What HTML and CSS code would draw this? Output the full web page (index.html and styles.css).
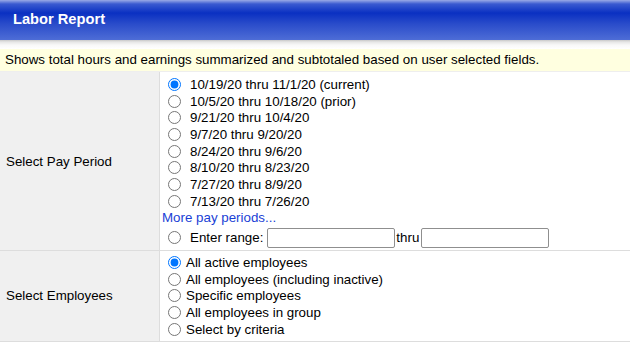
FILE: index.html
```html
<!DOCTYPE html>
<html>
<head>
<meta charset="utf-8">
<link rel="stylesheet" href="styles.css">
</head>
<body>
<div class="header"><span class="title">Labor Report</span></div>
<div class="shadow"></div>
<div class="desc">Shows total hours and earnings summarized and subtotaled based on user selected fields.</div>
<table class="form">
  <tr>
    <td class="label">Select Pay Period</td>
    <td class="field pay">
      <div class="opt wide"><input type="radio" name="pp" checked><span>10/19/20 thru 11/1/20 (current)</span></div>
      <div class="opt wide"><input type="radio" name="pp"><span>10/5/20 thru 10/18/20 (prior)</span></div>
      <div class="opt wide"><input type="radio" name="pp"><span>9/21/20 thru 10/4/20</span></div>
      <div class="opt wide"><input type="radio" name="pp"><span>9/7/20 thru 9/20/20</span></div>
      <div class="opt wide"><input type="radio" name="pp"><span>8/24/20 thru 9/6/20</span></div>
      <div class="opt wide"><input type="radio" name="pp"><span>8/10/20 thru 8/23/20</span></div>
      <div class="opt wide"><input type="radio" name="pp"><span>7/27/20 thru 8/9/20</span></div>
      <div class="opt wide"><input type="radio" name="pp"><span>7/13/20 thru 7/26/20</span></div>
      <div class="more"><a href="#">More pay periods...</a></div>
      <div class="opt wide range"><input type="radio" name="pp"><span>Enter range:</span><input type="text" class="date first"><span class="thru">thru</span><input type="text" class="date"></div>
    </td>
  </tr>
  <tr>
    <td class="label">Select Employees</td>
    <td class="field emp">
      <div class="opt"><input type="radio" name="emp" checked><span>All active employees</span></div>
      <div class="opt"><input type="radio" name="emp"><span>All employees (including inactive)</span></div>
      <div class="opt"><input type="radio" name="emp"><span>Specific employees</span></div>
      <div class="opt"><input type="radio" name="emp"><span>All employees in group</span></div>
      <div class="opt"><input type="radio" name="emp"><span>Select by criteria</span></div>
    </td>
  </tr>
</table>
</body>
</html>
```
FILE: styles.css
```css
html, body {
  margin: 0;
  padding: 0;
  background: #ffffff;
  font-family: "Liberation Sans", Arial, sans-serif;
  font-size: 13.33px;
  color: #000;
}
.header {
  height: 40px;
  background: linear-gradient(to bottom, #9aaae6 0px, #3a5ad0 4px, #0a30c2 13px, #2a4cca 24px, #4e6dd6 40px);
  display: flex;
  align-items: center;
  padding-left: 13px;
}
.title {
  color: #ffffff;
  font-weight: bold;
  font-size: 14.67px;
  margin-top: -2px;
}
.shadow {
  height: 9px;
  background: linear-gradient(to bottom, #c8c8c8 0px, #e6e6e6 2px, #f8f8f8 5px, #ffffff 9px);
}
.desc {
  background: #ffffe0;
  height: 22px;
  line-height: 22px;
  padding-left: 5px;
  border-bottom: 1px solid #eeeeee;
}
.form {
  border-collapse: collapse;
  width: 100%;
}
.form td {
  padding: 0;
  border-bottom: 1px solid #dddddd;
}
.label {
  width: 153px;
  background: #f0f0f0;
  padding-left: 6px !important;
  vertical-align: middle;
  border-right: 1px solid #dddddd;
}
.field {
  vertical-align: top;
  padding: 3px 0 3px 2px !important;
}
.field.pay {
  padding-top: 4px !important;
  padding-bottom: 1px !important;
}
.opt {
  display: flex;
  align-items: center;
  height: 16.7px;
}
.opt input[type="radio"] {
  margin: 0 5px 0 6px;
  width: 13px;
  height: 13px;
}
.opt.wide input[type="radio"] {
  margin-right: 9px;
}
.more {
  height: 16.7px;
  line-height: 16.7px;
}
.more a {
  color: #1a3fd6;
  text-decoration: none;
}
.range {
  height: 23px;
}
.date {
  width: 128px;
  height: 20px;
  box-sizing: border-box;
  border: 1px solid #8f8f8f;
  border-radius: 2px;
  padding: 0;
  margin: 0;
}
.date.first {
  margin-left: 4px;
  margin-right: 1px;
}
.thru {
  margin-right: 2px;
}
```
